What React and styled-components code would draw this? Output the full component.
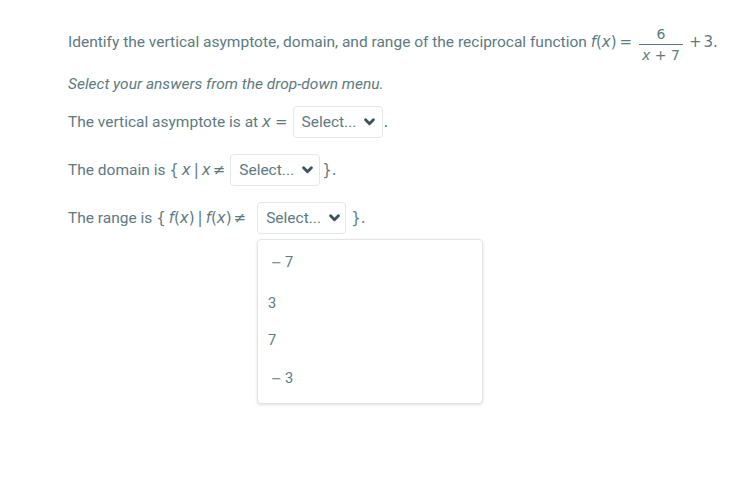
import React from "react";
import styled, { createGlobalStyle } from "styled-components";

const GlobalStyle = createGlobalStyle`
  html, body {
    margin: 0;
    padding: 0;
    background: #ffffff;
  }
  body {
    font-family: Roboto, "Noto Sans", sans-serif;
    color: #5d7a81;
  }
`;

const Page = styled.div`
  width: 739px;
  height: 481px;
  padding: 18px 0 0 68px;
  box-sizing: border-box;
  font-size: 15.5px;
`;

const Prompt = styled.div`
  display: flex;
  align-items: center;
  height: 48px;
  white-space: nowrap;
`;

const Hint = styled.div`
  font-style: italic;
  margin-top: 6px;
  height: 24px;
  line-height: 24px;
`;

const Row = styled.div`
  position: relative;
  display: flex;
  align-items: center;
  height: 32px;
  margin-top: ${({ $top }) => $top}px;
  white-space: nowrap;
`;

const Math = styled.span`
  display: inline-flex;
  align-items: center;
  font-family: "DejaVu Sans", sans-serif;
  font-size: 15px;
`;

const Var = styled.span`
  font-style: italic;
  font-family: "DejaVu Sans", sans-serif;
`;

const Op = styled.span`
  margin: 0 ${({ $gap = 3 }) => $gap}px;
`;

const Fraction = styled.span`
  display: inline-flex;
  flex-direction: column;
  align-items: center;
  margin: 4px 4px 0;
  font-size: 14px;
`;

const Numer = styled.span`
  padding: 0 3px 2px;
  line-height: 16px;
`;

const Denom = styled.span`
  border-top: 1px solid #5d7a81;
  padding: 2px 3px 0;
  line-height: 16px;
`;

const SelectBox = styled.div`
  display: inline-flex;
  align-items: center;
  gap: 8px;
  height: 32px;
  box-sizing: border-box;
  width: ${({ $w }) => $w}px;
  padding: 0 0 0 8px;
  margin: 0 ${({ $mr = 4 }) => $mr}px 0 ${({ $ml = 4 }) => $ml}px;
  border: 1px solid #e3e6e8;
  border-radius: 4px;
  background: #fff;
  color: #5d7a81;
  font-size: 15.5px;
`;

const Chevron = () => (
  <svg width="11" height="8" viewBox="0 0 11 8">
    <path d="M1.6 1.8 L5.5 5.8 L9.4 1.8" fill="none" stroke="#3a555d" strokeWidth="2.8" strokeLinecap="round" strokeLinejoin="round" />
  </svg>
);

const Menu = styled.ul`
  position: absolute;
  top: 37px;
  left: 189px;
  width: 226px;
  height: 165px;
  box-sizing: border-box;
  margin: 0;
  padding: 3px 0 0;
  list-style: none;
  background: #fff;
  border: 1px solid #e2e5e7;
  border-radius: 4px;
  box-shadow: 0 1px 3px rgba(0, 0, 0, 0.12);
`;

const Item = styled.li`
  height: ${({ $h }) => $h}px;
  display: flex;
  align-items: center;
  padding-left: ${({ $math }) => ($math ? 13 : 10)}px;
  font-size: 14.5px;
`;

const Minus = styled.span`
  font-family: "DejaVu Sans", sans-serif;
  font-size: 13px;
  margin-right: 3px;
`;

const Select = ({ w, ml, mr }) => (
  <SelectBox $w={w} $ml={ml} $mr={mr}>
    Select...
    <Chevron />
  </SelectBox>
);

export default function App() {
  return (
    <Page>
      <GlobalStyle />
      <Prompt>
        Identify the vertical asymptote, domain, and range of the reciprocal function&nbsp;
        <Math>
          <Var>f</Var>(<Var>x</Var>)<Op $gap={3}>=</Op>
          <Fraction>
            <Numer>6</Numer>
            <Denom>
              <Var>x</Var> + 7
            </Denom>
          </Fraction>
          <Op $gap={2}>+</Op>3.
        </Math>
      </Prompt>
      <Hint>Select your answers from the drop-down menu.</Hint>
      <Row $top={10}>
        The vertical asymptote is at&nbsp;
        <Math>
          <Var>x</Var>
          <Op $gap={4}>=</Op>
        </Math>
        <Select w={90} ml={1} mr={1} />
        <Math>.</Math>
      </Row>
      <Row $top={16}>
        The domain is&nbsp;
        <Math>
          {"{\u2009"}<Var>x</Var>{"\u2009|\u2009"}<Var>x</Var>
          <Op $gap={2}>≠</Op>
        </Math>
        <Select w={90} ml={3} mr={2} />
        <Math>{"}"}.</Math>
      </Row>
      <Row $top={16}>
        The range is&nbsp;
        <Math>
          {"{\u2009"}<Var>f</Var>(<Var>x</Var>){"\u2009|\u2009"}<Var>f</Var>(<Var>x</Var>)
          <Op $gap={2}>≠</Op>
        </Math>
        <Select w={89} ml={9} mr={5} />
        <Math>{"}"}.</Math>
        <Menu>
          <Item $h={38} $math><Minus>−</Minus>7</Item>
          <Item $h={44}>3</Item>
          <Item $h={30}>7</Item>
          <Item $h={46} $math><Minus>−</Minus>3</Item>
        </Menu>
      </Row>
    </Page>
  );
}
